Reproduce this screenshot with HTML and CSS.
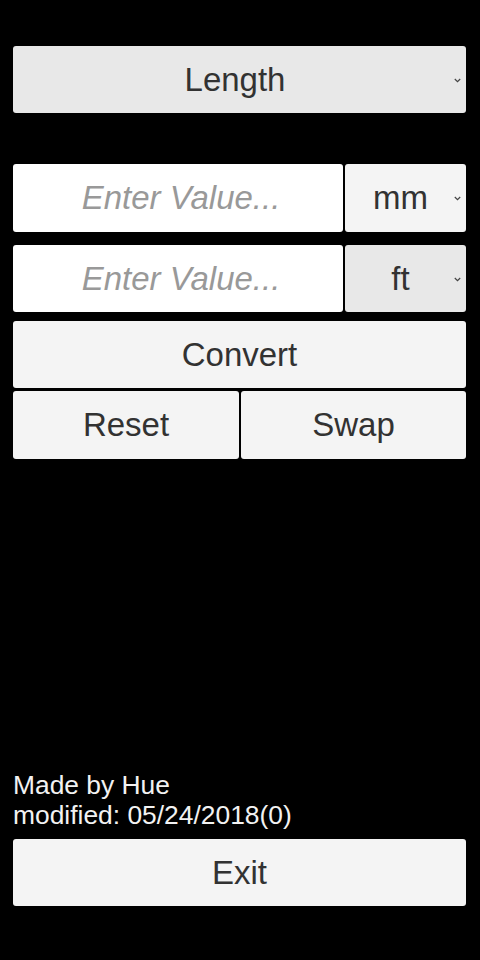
FILE: index.html
```html
<!DOCTYPE html>
<html>
<head>
<meta charset="utf-8">
<link rel="stylesheet" href="styles.css">
</head>
<body>
<div class="app">
  <div class="dropdown dropdown-main">
    <span class="caption">Length</span>
    <svg class="chev" width="7" height="5" viewBox="0 0 7 5"><path d="M0.8 1 L3.5 3.7 L6.2 1" fill="none" stroke="#444" stroke-width="1.2"/></svg>
  </div>

  <div class="row row-first">
    <input class="value" type="text" placeholder="Enter Value...">
    <div class="dropdown unit unit-light">
      <span class="caption">mm</span>
      <svg class="chev" width="7" height="5" viewBox="0 0 7 5"><path d="M0.8 1 L3.5 3.7 L6.2 1" fill="none" stroke="#444" stroke-width="1.2"/></svg>
    </div>
  </div>

  <div class="row row-second">
    <input class="value" type="text" placeholder="Enter Value...">
    <div class="dropdown unit unit-dark">
      <span class="caption">ft</span>
      <svg class="chev" width="7" height="5" viewBox="0 0 7 5"><path d="M0.8 1 L3.5 3.7 L6.2 1" fill="none" stroke="#444" stroke-width="1.2"/></svg>
    </div>
  </div>

  <button class="btn btn-convert">Convert</button>

  <div class="row row-actions">
    <button class="btn btn-half">Reset</button>
    <button class="btn btn-half btn-swap">Swap</button>
  </div>

  <div class="footer">
    <div class="credits">
      <div>Made by Hue</div>
      <div>modified: 05/24/2018(0)</div>
    </div>
    <button class="btn btn-exit">Exit</button>
  </div>
</div>
</body>
</html>
```

FILE: styles.css
```css
html, body {
  margin: 0;
  padding: 0;
  background: #000;
}

.app {
  box-sizing: border-box;
  width: 480px;
  height: 960px;
  padding: 46px 14px 54px 13px;
  display: flex;
  flex-direction: column;
  font-family: "Liberation Sans", Arial, sans-serif;
  color: #323232;
}

.dropdown {
  box-sizing: border-box;
  height: 67px;
  border-radius: 3px;
  display: flex;
  align-items: center;
  justify-content: center;
  position: relative;
  font-size: 33px;
}

.dropdown-main {
  background: #e8e8e8;
  padding-right: 9px;
}

.chev {
  position: absolute;
  right: 5px;
  top: 50%;
  margin-top: -2px;
}

.row {
  display: flex;
  gap: 2px;
}

.row-first {
  margin-top: 51px;
  height: 68px;
}

.row-second {
  margin-top: 13px;
  height: 67px;
}

.value {
  box-sizing: border-box;
  width: 330px;
  height: 100%;
  border: none;
  outline: none;
  border-radius: 3px;
  background: #fff;
  font-family: "Liberation Sans", Arial, sans-serif;
  font-size: 33px;
  text-align: center;
  padding: 0 0 0 6px;
  color: #323232;
}

.value::placeholder {
  color: #999;
  font-style: italic;
  opacity: 1;
}

.unit {
  flex: 1;
  height: 100%;
  padding-right: 10px;
}

.unit-light {
  background: #f4f4f4;
}

.unit-dark {
  background: #e8e8e8;
}

.btn {
  box-sizing: border-box;
  border: none;
  border-radius: 3px;
  background: #f4f4f4;
  font-family: "Liberation Sans", Arial, sans-serif;
  font-size: 33px;
  color: #323232;
  padding: 0;
  height: 67px;
  width: 100%;
}

.btn-convert {
  margin-top: 9px;
}

.row-actions {
  margin-top: 3px;
  height: 68px;
}

.btn-half {
  height: 68px;
  width: 226px;
}

.btn-swap {
  width: 225px;
}

.footer {
  margin-top: auto;
  display: flex;
  flex-direction: column;
}

.credits {
  color: #f2f2f2;
  font-size: 26.4px;
  line-height: 30px;
  margin-bottom: 9px;
}
```
